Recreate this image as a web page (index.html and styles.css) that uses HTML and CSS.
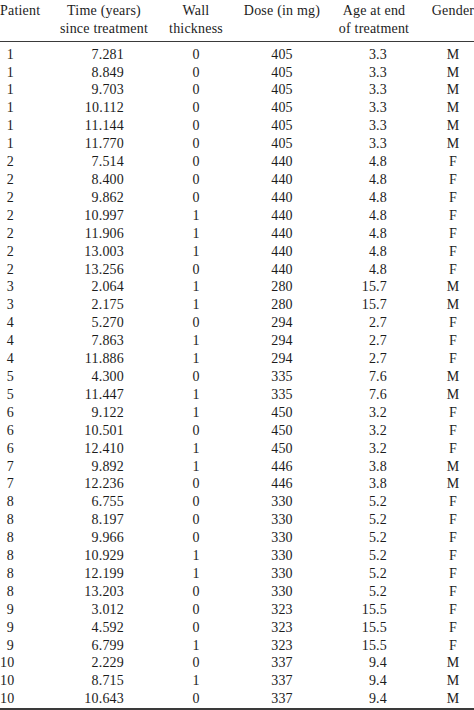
FILE: index.html
```html
<!DOCTYPE html>
<html lang="en">
<head>
<meta charset="utf-8">
<title>Patient table</title>
<link rel="stylesheet" href="styles.css">
</head>
<body>
<div class="frame">
<table class="data">
<colgroup>
<col class="w-pat"><col class="w-time"><col class="w-wall"><col class="w-dose"><col class="w-age"><col class="w-gen">
</colgroup>
<thead>
<tr>
<th class="h-left">Patient</th>
<th>Time (years)<br>since treatment</th>
<th>Wall<br>thickness</th>
<th>Dose (in mg)</th>
<th>Age at end<br>of treatment</th>
<th>Gender</th>
</tr>
</thead>
<tbody>
<tr class="first"><td class="pat">1</td><td class="time">7.281</td><td class="ctr">0</td><td class="ctr">405</td><td class="age">3.3</td><td class="ctr">M</td></tr>
<tr><td class="pat">1</td><td class="time">8.849</td><td class="ctr">0</td><td class="ctr">405</td><td class="age">3.3</td><td class="ctr">M</td></tr>
<tr><td class="pat">1</td><td class="time">9.703</td><td class="ctr">0</td><td class="ctr">405</td><td class="age">3.3</td><td class="ctr">M</td></tr>
<tr><td class="pat">1</td><td class="time">10.112</td><td class="ctr">0</td><td class="ctr">405</td><td class="age">3.3</td><td class="ctr">M</td></tr>
<tr><td class="pat">1</td><td class="time">11.144</td><td class="ctr">0</td><td class="ctr">405</td><td class="age">3.3</td><td class="ctr">M</td></tr>
<tr><td class="pat">1</td><td class="time">11.770</td><td class="ctr">0</td><td class="ctr">405</td><td class="age">3.3</td><td class="ctr">M</td></tr>
<tr><td class="pat">2</td><td class="time">7.514</td><td class="ctr">0</td><td class="ctr">440</td><td class="age">4.8</td><td class="ctr">F</td></tr>
<tr><td class="pat">2</td><td class="time">8.400</td><td class="ctr">0</td><td class="ctr">440</td><td class="age">4.8</td><td class="ctr">F</td></tr>
<tr><td class="pat">2</td><td class="time">9.862</td><td class="ctr">0</td><td class="ctr">440</td><td class="age">4.8</td><td class="ctr">F</td></tr>
<tr><td class="pat">2</td><td class="time">10.997</td><td class="ctr">1</td><td class="ctr">440</td><td class="age">4.8</td><td class="ctr">F</td></tr>
<tr><td class="pat">2</td><td class="time">11.906</td><td class="ctr">1</td><td class="ctr">440</td><td class="age">4.8</td><td class="ctr">F</td></tr>
<tr><td class="pat">2</td><td class="time">13.003</td><td class="ctr">1</td><td class="ctr">440</td><td class="age">4.8</td><td class="ctr">F</td></tr>
<tr><td class="pat">2</td><td class="time">13.256</td><td class="ctr">0</td><td class="ctr">440</td><td class="age">4.8</td><td class="ctr">F</td></tr>
<tr><td class="pat">3</td><td class="time">2.064</td><td class="ctr">1</td><td class="ctr">280</td><td class="age">15.7</td><td class="ctr">M</td></tr>
<tr><td class="pat">3</td><td class="time">2.175</td><td class="ctr">1</td><td class="ctr">280</td><td class="age">15.7</td><td class="ctr">M</td></tr>
<tr><td class="pat">4</td><td class="time">5.270</td><td class="ctr">0</td><td class="ctr">294</td><td class="age">2.7</td><td class="ctr">F</td></tr>
<tr><td class="pat">4</td><td class="time">7.863</td><td class="ctr">1</td><td class="ctr">294</td><td class="age">2.7</td><td class="ctr">F</td></tr>
<tr><td class="pat">4</td><td class="time">11.886</td><td class="ctr">1</td><td class="ctr">294</td><td class="age">2.7</td><td class="ctr">F</td></tr>
<tr><td class="pat">5</td><td class="time">4.300</td><td class="ctr">0</td><td class="ctr">335</td><td class="age">7.6</td><td class="ctr">M</td></tr>
<tr><td class="pat">5</td><td class="time">11.447</td><td class="ctr">1</td><td class="ctr">335</td><td class="age">7.6</td><td class="ctr">M</td></tr>
<tr><td class="pat">6</td><td class="time">9.122</td><td class="ctr">1</td><td class="ctr">450</td><td class="age">3.2</td><td class="ctr">F</td></tr>
<tr><td class="pat">6</td><td class="time">10.501</td><td class="ctr">0</td><td class="ctr">450</td><td class="age">3.2</td><td class="ctr">F</td></tr>
<tr><td class="pat">6</td><td class="time">12.410</td><td class="ctr">1</td><td class="ctr">450</td><td class="age">3.2</td><td class="ctr">F</td></tr>
<tr><td class="pat">7</td><td class="time">9.892</td><td class="ctr">1</td><td class="ctr">446</td><td class="age">3.8</td><td class="ctr">M</td></tr>
<tr><td class="pat">7</td><td class="time">12.236</td><td class="ctr">0</td><td class="ctr">446</td><td class="age">3.8</td><td class="ctr">M</td></tr>
<tr><td class="pat">8</td><td class="time">6.755</td><td class="ctr">0</td><td class="ctr">330</td><td class="age">5.2</td><td class="ctr">F</td></tr>
<tr><td class="pat">8</td><td class="time">8.197</td><td class="ctr">0</td><td class="ctr">330</td><td class="age">5.2</td><td class="ctr">F</td></tr>
<tr><td class="pat">8</td><td class="time">9.966</td><td class="ctr">0</td><td class="ctr">330</td><td class="age">5.2</td><td class="ctr">F</td></tr>
<tr><td class="pat">8</td><td class="time">10.929</td><td class="ctr">1</td><td class="ctr">330</td><td class="age">5.2</td><td class="ctr">F</td></tr>
<tr><td class="pat">8</td><td class="time">12.199</td><td class="ctr">1</td><td class="ctr">330</td><td class="age">5.2</td><td class="ctr">F</td></tr>
<tr><td class="pat">8</td><td class="time">13.203</td><td class="ctr">0</td><td class="ctr">330</td><td class="age">5.2</td><td class="ctr">F</td></tr>
<tr><td class="pat">9</td><td class="time">3.012</td><td class="ctr">0</td><td class="ctr">323</td><td class="age">15.5</td><td class="ctr">F</td></tr>
<tr><td class="pat">9</td><td class="time">4.592</td><td class="ctr">0</td><td class="ctr">323</td><td class="age">15.5</td><td class="ctr">F</td></tr>
<tr><td class="pat">9</td><td class="time">6.799</td><td class="ctr">1</td><td class="ctr">323</td><td class="age">15.5</td><td class="ctr">F</td></tr>
<tr><td class="pat">10</td><td class="time">2.229</td><td class="ctr">0</td><td class="ctr">337</td><td class="age">9.4</td><td class="ctr">M</td></tr>
<tr><td class="pat">10</td><td class="time">8.715</td><td class="ctr">1</td><td class="ctr">337</td><td class="age">9.4</td><td class="ctr">M</td></tr>
<tr><td class="pat">10</td><td class="time">10.643</td><td class="ctr">0</td><td class="ctr">337</td><td class="age">9.4</td><td class="ctr">M</td></tr>
</tbody>
</table>
</div>
</body>
</html>
```
FILE: styles.css
```css
html, body {
  margin: 0;
  padding: 0;
  background: #ffffff;
}

.frame {
  width: 474px;
  height: 710px;
  overflow: hidden;
}

.data {
  width: 486px;
  table-layout: fixed;
  border-collapse: collapse;
  font-family: "Liberation Serif", "Times New Roman", serif;
  font-size: 14px;
  line-height: 17.9px;
  letter-spacing: 0.2px;
  color: #1c1c1c;
  border-bottom: 3px solid #3a3a3a;
}

.w-pat { width: 52px; }
.w-time { width: 104px; }
.w-wall { width: 80px; }
.w-dose { width: 92px; }
.w-age { width: 92px; }
.w-gen { width: 66px; }

.data th {
  font-weight: normal;
  text-align: center;
  vertical-align: top;
  padding: 2.4px 0 2.7px 0;
  border-bottom: 1px solid #3a3a3a;
  white-space: nowrap;
  line-height: 18px;
}

.data th.h-left {
  text-align: left;
}

.data td {
  padding: 0;
  white-space: nowrap;
}

.data tr.first td {
  padding-top: 3.6px;
}

.data td.pat {
  text-align: right;
  padding-right: 38px;
}

.data td.time {
  text-align: right;
  padding-right: 32px;
}

.data td.ctr {
  text-align: center;
}

.data td.age {
  text-align: right;
  padding-right: 33px;
}
```
